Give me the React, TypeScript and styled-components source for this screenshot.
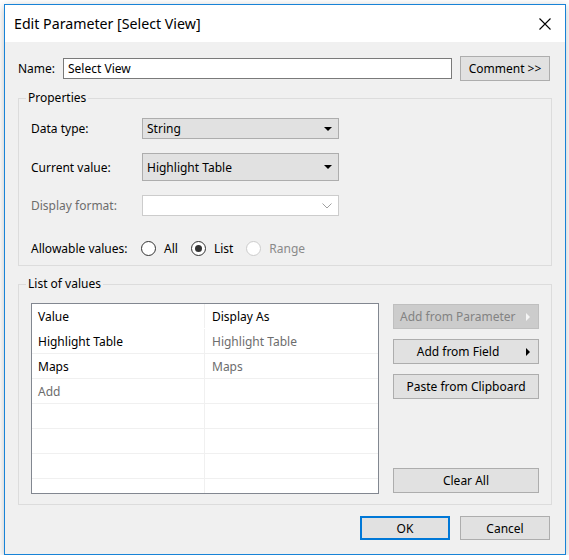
import React from 'react';
import styled, { createGlobalStyle, css } from 'styled-components';

const Global = createGlobalStyle`
    html, body {
        margin: 0;
        padding: 0;
        background: #ffffff;
    }
    body {
        font-family: "Noto Sans", "Open Sans", sans-serif;
        font-size: 12px;
        color: #000;
    }
`;

const Window = styled.div`
    margin: 4px 0 0 4px;
    width: 562px;
    height: 551px;
    box-sizing: border-box;
    border: 1px solid #1883d7;
    background: #f0f0f0;
    display: flex;
    flex-direction: column;
    box-shadow: 0 2px 8px rgba(0, 0, 0, 0.25);
`;

const TitleBar = styled.div`
    height: 37px;
    background: #ffffff;
    display: flex;
    align-items: center;
    justify-content: space-between;
    padding: 0 14px 0 9px;
`;

const Title = styled.div`
    font-size: 14.2px;
    color: #000;
`;

const Body = styled.div`
    flex: 1;
    display: flex;
    flex-direction: column;
    padding: 14px 14px 14px 13px;
`;

const NameRow = styled.div`
    display: flex;
    align-items: center;
    height: 25px;
`;

const NameLabel = styled.label`
    width: 45px;
`;

const TextInput = styled.div<{ disabled?: boolean }>`
    box-sizing: border-box;
    height: 21px;
    background: #fff;
    border: 1px solid #7a7a7a;
    display: flex;
    align-items: center;
    padding: 0 4px;
    ${(p) => p.disabled && css`
        border-color: #cccccc;
        justify-content: flex-end;
        padding: 0 6px;
    `}
`;

const NameInput = styled(TextInput)`
    width: 389px;
`;

const Button = styled.div<{ disabled?: boolean; primary?: boolean; w?: number; h?: number }>`
    box-sizing: border-box;
    width: ${(p) => p.w || 90}px;
    height: ${(p) => p.h || 25}px;
    background: #e1e1e1;
    border: 1px solid #adadad;
    display: flex;
    align-items: center;
    justify-content: center;
    position: relative;
    ${(p) => p.disabled && css`
        background: #cccccc;
        border-color: #bfbfbf;
        color: #838383;
    `}
    ${(p) => p.primary && css`
        border: 2px solid #0078d7;
    `}
`;

const MenuArrow = styled.span<{ disabled?: boolean }>`
    position: absolute;
    right: 8px;
    top: 50%;
    margin-top: -4px;
    width: 0;
    height: 0;
    border-top: 4px solid transparent;
    border-bottom: 4px solid transparent;
    border-left: 4px solid ${(p) => (p.disabled ? '#f5f5f5' : '#000')};
`;

const Group = styled.fieldset<{ h: number }>`
    margin: 0;
    box-sizing: border-box;
    width: 534px;
    height: ${(p) => p.h}px;
    border: 1px solid #dcdcdc;
    padding: 0 12px;
`;

const Legend = styled.legend`
    padding: 0 2px;
    margin-left: -5px;
    line-height: 16px;
`;

const PropGrid = styled.div`
    display: grid;
    grid-template-columns: 111px 197px;
    grid-template-rows: 21px 28px 21px 36px;
    row-gap: 14px;
    align-items: center;
    margin-top: 12px;
`;

const FieldLabel = styled.div<{ disabled?: boolean }>`
    color: ${(p) => (p.disabled ? '#6d6d6d' : '#000')};
`;

const Select = styled.div<{ h: number }>`
    box-sizing: border-box;
    height: ${(p) => p.h}px;
    background: #e1e1e1;
    border: 1px solid #adadad;
    display: flex;
    align-items: center;
    justify-content: space-between;
    padding: 0 6px 0 4px;
`;

const DropArrow = styled.span`
    width: 0;
    height: 0;
    border-left: 4px solid transparent;
    border-right: 4px solid transparent;
    border-top: 4px solid #000;
`;

const RadioRow = styled.div`
    display: flex;
    align-items: center;
`;

const RadioItem = styled.label<{ disabled?: boolean }>`
    display: flex;
    align-items: center;
    margin-right: 14px;
    color: ${(p) => (p.disabled ? '#8a8a8a' : '#000')};
`;

const RadioCircle = styled.span<{ checked?: boolean; disabled?: boolean }>`
    box-sizing: border-box;
    width: 15px;
    height: 15px;
    border-radius: 50%;
    border: 1px solid ${(p) => (p.disabled ? '#cccccc' : '#333333')};
    background: #fff;
    margin-right: 8px;
    margin-left: -1px;
    display: flex;
    align-items: center;
    justify-content: center;
    &::after {
        content: '';
        display: ${(p) => (p.checked ? 'block' : 'none')};
        width: 7px;
        height: 7px;
        border-radius: 50%;
        background: #333333;
    }
`;

const ListArea = styled.div`
    display: flex;
    justify-content: space-between;
    margin-top: 11px;
    height: 191px;
`;

const Table = styled.div`
    box-sizing: border-box;
    width: 348px;
    height: 191px;
    background: #fff;
    border: 1px solid #828790;
    overflow: hidden;
`;

const Row = styled.div<{ header?: boolean }>`
    display: grid;
    grid-template-columns: 172px 1fr;
    height: 25px;
    box-sizing: border-box;
    border-bottom: 1px solid ${(p) => (p.header ? '#fff' : '#f0f0f0')};
`;

const Cell = styled.div<{ muted?: boolean; second?: boolean }>`
    display: flex;
    align-items: center;
    padding-left: ${(p) => (p.second ? 7 : 6)}px;
    color: ${(p) => (p.muted ? '#6d6d6d' : '#000')};
    ${(p) => p.second && css`
        border-left: 1px solid #f0f0f0;
    `}
`;

const ButtonColumn = styled.div`
    display: flex;
    flex-direction: column;
    gap: 10px;
    width: 146px;
    padding-top: 1px;
    & > :last-child {
        margin-top: auto;
        margin-bottom: 1px;
    }
`;

const Footer = styled.div`
    display: flex;
    justify-content: flex-end;
    gap: 10px;
    margin-top: 11px;
    padding-right: 1px;
`;

function CloseIcon() {
    return (
        <svg width="12" height="12" viewBox="0 0 12 12">
            <path d="M0.5 0.5 L11.5 11.5 M11.5 0.5 L0.5 11.5" stroke="#000" strokeWidth="1.1" fill="none" />
        </svg>
    );
}

function Chevron() {
    return (
        <svg width="10" height="6" viewBox="0 0 10 6">
            <path d="M0.5 0.5 L5 5 L9.5 0.5" stroke="#a0a0a0" strokeWidth="1" fill="none" />
        </svg>
    );
}

const rows: [string, string][] = [
    ['Highlight Table', 'Highlight Table'],
    ['Maps', 'Maps'],
];

export default function App() {
    return (
        <>
            <Global />
            <Window>
                <TitleBar>
                    <Title>Edit Parameter [Select View]</Title>
                    <CloseIcon />
                </TitleBar>
                <Body>
                    <NameRow>
                        <NameLabel>Name:</NameLabel>
                        <NameInput>Select View</NameInput>
                        <Button style={{ marginLeft: 8 }}>Comment &gt;&gt;</Button>
                    </NameRow>

                    <Group h={176} style={{ marginTop: 9 }}>
                        <Legend>Properties</Legend>
                        <PropGrid>
                            <FieldLabel>Data type:</FieldLabel>
                            <Select h={21}>String<DropArrow /></Select>
                            <FieldLabel>Current value:</FieldLabel>
                            <Select h={28}>Highlight Table<DropArrow /></Select>
                            <FieldLabel disabled>Display format:</FieldLabel>
                            <TextInput disabled><Chevron /></TextInput>
                            <FieldLabel>Allowable values:</FieldLabel>
                            <RadioRow>
                                <RadioItem><RadioCircle />All</RadioItem>
                                <RadioItem><RadioCircle checked />List</RadioItem>
                                <RadioItem disabled><RadioCircle disabled />Range</RadioItem>
                            </RadioRow>
                        </PropGrid>
                    </Group>

                    <Group h={229} style={{ marginTop: 10 }}>
                        <Legend>List of values</Legend>
                        <ListArea>
                            <Table>
                                <Row header>
                                    <Cell>Value</Cell>
                                    <Cell second>Display As</Cell>
                                </Row>
                                {rows.map(([v, d]) => (
                                    <Row key={v}>
                                        <Cell>{v}</Cell>
                                        <Cell second muted>{d}</Cell>
                                    </Row>
                                ))}
                                <Row>
                                    <Cell muted>Add</Cell>
                                    <Cell second />
                                </Row>
                                {[0, 1, 2, 3].map((i) => (
                                    <Row key={i}>
                                        <Cell />
                                        <Cell second />
                                    </Row>
                                ))}
                            </Table>
                            <ButtonColumn>
                                <Button w={146} disabled style={{ justifyContent: 'flex-start', paddingLeft: 6 }}>
                                    Add from Parameter<MenuArrow disabled />
                                </Button>
                                <Button w={146} style={{ paddingRight: 16 }}>
                                    Add from Field<MenuArrow />
                                </Button>
                                <Button w={146}>Paste from Clipboard</Button>
                                <Button w={146}>Clear All</Button>
                            </ButtonColumn>
                        </ListArea>
                    </Group>

                    <Footer>
                        <Button primary h={24}>OK</Button>
                        <Button h={24}>Cancel</Button>
                    </Footer>
                </Body>
            </Window>
        </>
    );
}
